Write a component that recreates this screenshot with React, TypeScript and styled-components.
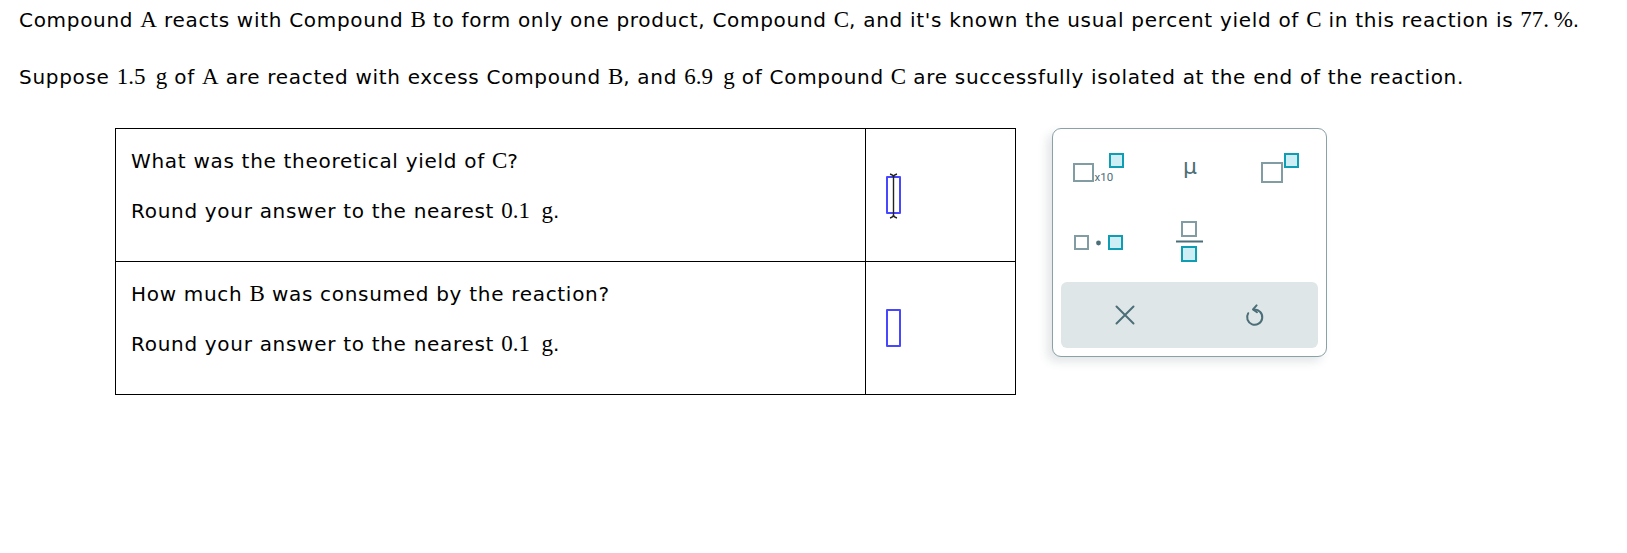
import { FC, Fragment } from 'react';
import styled, { createGlobalStyle } from 'styled-components';

const GlobalStyle = createGlobalStyle`
  body {
    margin: 0;
    background: #fff;
    font-family: 'DejaVu Sans', Verdana, sans-serif;
    color: #000;
  }
`;

const Page = styled.div`
  padding: 7px 19px;
`;

const Para = styled.p<{ gap: number }>`
  margin: 0 0 ${(props) => props.gap}px;
  font-size: 20px;
  letter-spacing: 0.7px;
  line-height: 26px;
  white-space: nowrap;
`;

const M = styled.span`
  font-family: 'Liberation Serif', 'Times New Roman', serif;
  font-size: 23px;
  letter-spacing: 0;
  line-height: 1;
`;

const Work = styled.div`
  display: flex;
  align-items: flex-start;
  margin-left: 96px;
`;

const Grid = styled.div`
  display: grid;
  grid-template-columns: 750px 150px;
  grid-auto-rows: 133px;
  border-top: 1px solid #000;
  border-left: 1px solid #000;
`;

const Cell = styled.div`
  border-right: 1px solid #000;
  border-bottom: 1px solid #000;
  box-sizing: border-box;
`;

const QuestionCell = styled(Cell)`
  padding: 19px 15px;
`;

const AnswerCell = styled(Cell)`
  display: flex;
  align-items: center;
  padding-left: 20px;
`;

const Line = styled.p`
  margin: 0 0 24px;
  font-size: 20px;
  letter-spacing: 0.7px;
  line-height: 26px;
  white-space: nowrap;
`;

const Input = styled.div`
  position: relative;
  width: 15px;
  height: 38px;
  box-sizing: border-box;
  border: 2px solid #4747ff;
  border-radius: 1px;
  margin-top: -1px;
`;

const Caret = styled.svg`
  position: absolute;
  left: 1px;
  top: -5px;
`;

const Panel = styled.div`
  width: 275px;
  height: 229px;
  box-sizing: border-box;
  margin-left: 36px;
  border: 1px solid #8aa1a8;
  border-radius: 9px;
  background: #fff;
  box-shadow: -5px 5px 10px rgba(60, 80, 90, 0.14);
  display: flex;
  flex-direction: column;
`;

const Keys = styled.div`
  display: grid;
  grid-template-columns: repeat(3, 1fr);
  grid-auto-rows: 74px;
  padding-top: 2px;
  padding-left: 1px;
`;

const Key = styled.div`
  display: flex;
  align-items: center;
  justify-content: center;
`;

const Mu = styled.span`
  font-family: 'DejaVu Sans', sans-serif;
  font-size: 22px;
  color: #4d6f78;
  margin-top: -4px;
`;

const Actions = styled.div`
  margin: auto 8px 8px;
  height: 66px;
  border-radius: 6px;
  background: #dfe6e8;
  display: grid;
  grid-template-columns: 1fr 1fr;
`;

const GRAY = '#819ca3';
const TEAL = '#0f9db3';
const TEAL_FILL = '#cdeef4';
const INK = '#4b6e78';

const Sci: FC = () => (
  <svg width="52" height="30" viewBox="0 0 52 30">
    <rect x="1" y="11" width="19" height="17" fill="#fff" stroke={GRAY} strokeWidth="2" />
    <text x="21.5" y="27.5" fontSize="11.5" fontFamily="Roboto, sans-serif" fill={INK}>
      x10
    </text>
    <rect x="37" y="1" width="13" height="13" fill={TEAL_FILL} stroke={TEAL} strokeWidth="2" />
  </svg>
);

const Sup: FC = () => (
  <svg width="39" height="31" viewBox="0 0 39 31">
    <rect x="1" y="10" width="20" height="19" fill="#fff" stroke={GRAY} strokeWidth="2" />
    <rect x="24" y="1" width="13" height="13" fill={TEAL_FILL} stroke={TEAL} strokeWidth="2" />
  </svg>
);

const Dot: FC = () => (
  <svg width="50" height="15" viewBox="0 0 50 15">
    <rect x="1" y="1" width="13" height="13" fill="#fff" stroke={GRAY} strokeWidth="2" />
    <circle cx="24.5" cy="8" r="2.4" fill={INK} />
    <rect x="35" y="1" width="13" height="13" fill={TEAL_FILL} stroke={TEAL} strokeWidth="2" />
  </svg>
);

const Frac: FC = () => (
  <svg width="27" height="42" viewBox="0 0 27 42">
    <rect x="6" y="1" width="14" height="14" fill="#fff" stroke={GRAY} strokeWidth="2" />
    <line x1="0" y1="20.5" x2="27" y2="20.5" stroke={INK} strokeWidth="2" />
    <rect x="6" y="26" width="14" height="14" fill={TEAL_FILL} stroke={TEAL} strokeWidth="2" />
  </svg>
);

const Clear: FC = () => (
  <svg width="20" height="20" viewBox="0 0 20 20">
    <path d="M1.5 1.5 L18.5 18.5 M18.5 1.5 L1.5 18.5" stroke={INK} strokeWidth="2" strokeLinecap="round" />
  </svg>
);

const Undo: FC = () => (
  <svg width="22" height="24" viewBox="0 0 22 24">
    <path
      d="M5.2 10.2 A7.6 7.6 0 1 0 11.2 6.6"
      fill="none"
      stroke={INK}
      strokeWidth="2"
      strokeLinecap="round"
    />
    <path
      d="M13.6 2.4 L10 6.4 L14 9.2"
      fill="none"
      stroke={INK}
      strokeWidth="2"
      strokeLinecap="round"
      strokeLinejoin="round"
    />
  </svg>
);

const questions = [
  {
    ask: (
      <>
        What was the theoretical yield of <M>C</M>?
      </>
    ),
    focused: true,
  },
  {
    ask: (
      <>
        How much <M>B</M> was consumed by the reaction?
      </>
    ),
    focused: false,
  },
];

export default function App() {
  return (
    <Page>
      <GlobalStyle />
      <Para gap={31}>
        Compound <M>A</M> reacts with Compound <M>B</M> to form only one product, Compound <M>C</M>, and
        it's known the usual percent yield of <M>C</M> in this reaction is <M>77.&thinsp;%</M>.
      </Para>
      <Para gap={38}>
        Suppose <M>1.5 &thinsp;g</M> of <M>A</M> are reacted with excess Compound <M>B</M>, and{' '}
        <M>6.9 &thinsp;g</M> of Compound <M>C</M> are successfully isolated at the end of the reaction.
      </Para>
      <Work>
        <Grid>
          {questions.map((q, i) => (
            <Fragment key={i}>
              <QuestionCell>
                <Line>{q.ask}</Line>
                <Line>
                  Round your answer to the nearest <M>0.1&ensp;g</M>.
                </Line>
              </QuestionCell>
              <AnswerCell>
                <Input>
                  {q.focused && (
                    <Caret width="9" height="46" viewBox="0 0 9 46">
                      <path
                        d="M1 1 Q4.5 2 4.5 4 Q4.5 2 8 1 M4.5 4 L4.5 42 M1 45 Q4.5 44 4.5 42 Q4.5 44 8 45"
                        fill="none"
                        stroke="#222"
                        strokeWidth="1.4"
                      />
                    </Caret>
                  )}
                </Input>
              </AnswerCell>
            </Fragment>
          ))}
        </Grid>
        <Panel>
          <Keys>
            <Key>
              <Sci />
            </Key>
            <Key>
              <Mu>μ</Mu>
            </Key>
            <Key>
              <Sup />
            </Key>
            <Key>
              <Dot />
            </Key>
            <Key>
              <Frac />
            </Key>
            <Key />
          </Keys>
          <Actions>
            <Key>
              <Clear />
            </Key>
            <Key>
              <Undo />
            </Key>
          </Actions>
        </Panel>
      </Work>
    </Page>
  );
}
